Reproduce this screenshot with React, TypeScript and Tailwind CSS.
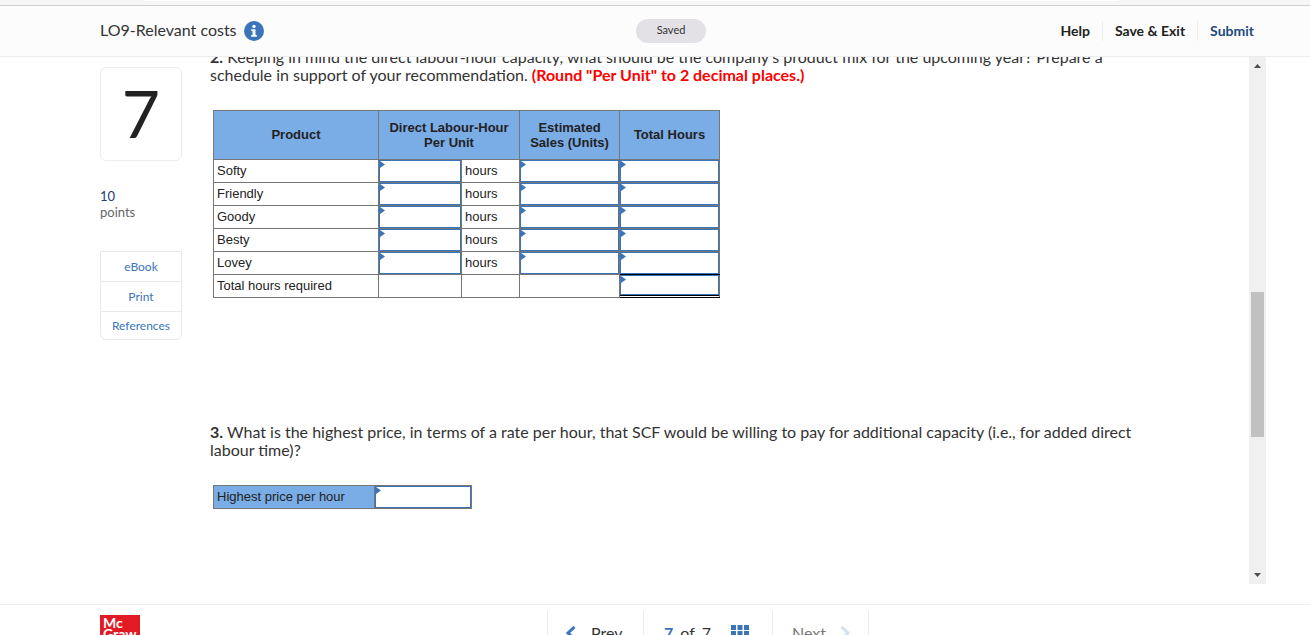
import React from "react";

const products = ["Softy", "Friendly", "Goody", "Besty", "Lovey"];

function EntryField({ label, short = false }: { label: string; short?: boolean }) {
  return (
    <div className="relative">
      <input
        type="text"
        aria-label={label}
        className={`block w-full border border-[#3a75ba] bg-white px-2 text-[13px] outline-none ${short ? "h-5" : "h-[22px]"}`}
      />
      <svg className="absolute left-px top-px" width="5" height="7" viewBox="0 0 5 7" aria-hidden="true">
        <path d="M0 0 5 3.5 0 7Z" fill="#3a75ba" />
      </svg>
    </div>
  );
}

function ScheduleTable() {
  const cell = "border border-[#767676] p-0";
  const textCell = "border border-[#767676] pt-0 pb-px pl-[3px] pr-0";
  const heading = "border border-[#767676] px-0 pt-0 pb-px";
  return (
    <table className="w-[507px] table-fixed border-collapse font-['Liberation_Sans',Arial,sans-serif] text-[13px] leading-[15px] text-[#222]">
      <colgroup>
        <col className="w-[165px]" />
        <col className="w-[83px]" />
        <col className="w-[58px]" />
        <col className="w-[100px]" />
        <col className="w-[100px]" />
      </colgroup>
      <thead>
        <tr className="h-[49px] bg-[#7aace6]">
          <th scope="col" className={heading}>Product</th>
          <th scope="col" colSpan={2} className={heading}>Direct Labour-Hour<br />Per Unit</th>
          <th scope="col" className={heading}>Estimated<br />Sales (Units)</th>
          <th scope="col" className={heading}>Total Hours</th>
        </tr>
      </thead>
      <tbody>
        {products.map((name, i) => (
          <tr key={name} className="h-[23px]">
            <td className={textCell}>{name}</td>
            <td className={cell}><EntryField label={`${name} labour-hours per unit`} /></td>
            <td className={textCell}>hours</td>
            <td className={cell}><EntryField label={`${name} estimated sales`} /></td>
            <td className={i === products.length - 1 ? "border border-[#767676] border-b-black p-0" : cell}>
              <EntryField label={`${name} total hours`} />
            </td>
          </tr>
        ))}
        <tr className="h-[23px]">
          <td className={textCell}>Total hours required</td>
          <td className={cell} />
          <td className={cell} />
          <td className={cell} />
          <td className="border border-[#767676] border-y-black p-0">
            <EntryField label="Total hours required" short />
            <div className="h-[2px] border-t border-black" />
          </td>
        </tr>
      </tbody>
    </table>
  );
}

function Header() {
  return (
    <header className="flex h-[51px] shrink-0 items-center border-b border-[#ececec] bg-[#fcfcfc] pl-[100px] pr-[56px]">
      <div className="flex flex-1 items-center gap-[7px]">
        <h1 className="pb-[2px] text-[16px] leading-5 text-[#333]">LO9-Relevant costs</h1>
        <button type="button" aria-label="Assignment information">
          <svg width="20" height="20" viewBox="0 0 20 20" className="block" aria-hidden="true">
            <circle cx="10" cy="10" r="10" fill="#3a75ba" />
            <circle cx="10" cy="5.4" r="1.7" fill="#fff" />
            <path d="M7.2 8.2h4.3v5.8h1.3v1.8H7.2V14h1.3v-4H7.2Z" fill="#fff" />
          </svg>
        </button>
      </div>
      <span className="mr-3 flex h-6 w-[70px] items-center justify-center rounded-full bg-[#e4e1e6] pb-[2px] text-[11px] text-[#333]">Saved</span>
      <nav className="flex flex-1 items-center justify-end text-[14px] font-bold leading-5 text-[#222]">
        <button type="button" className="pr-3">Help</button>
        <button type="button" className="border-l border-[#ececec] px-3">Save &amp; Exit</button>
        <button type="button" className="border-l border-[#ececec] pl-3 text-[#1d4a80]">Submit</button>
      </nav>
    </header>
  );
}

function Sidebar() {
  const item = "flex items-center justify-center border-[#e8e8e8]";
  return (
    <aside className="w-[82px] shrink-0 pt-[10px]">
      <div className="flex h-[94px] items-center justify-center rounded-md border border-[#ececec] pb-[2px] text-[66px] leading-none text-[#222]">7</div>
      <p className="mt-[27px] text-[13px] leading-4 text-[#1d3c6a]">10</p>
      <p className="text-[13px] leading-4 text-[#666]">points</p>
      <nav className="mt-[31px] flex flex-col rounded-b-md border border-[#e8e8e8] text-[12px] text-[#3a75ba]">
        <a href="#ebook" className={`${item} h-[29px]`}>eBook</a>
        <a href="#print" className={`${item} h-[30px] border-t`}>Print</a>
        <a href="#references" className={`${item} h-[28px] border-t`}>References</a>
      </nav>
    </aside>
  );
}

function ScrollTrack() {
  return (
    <div className="mr-[44px] flex w-[17px] shrink-0 flex-col items-center bg-[#f0f0f0] py-[7px]" aria-hidden="true">
      <svg width="7" height="4" viewBox="0 0 7 4" className="shrink-0"><path d="M0 4 3.5 0 7 4Z" fill="#4d4d4d" /></svg>
      <div className="grow-[224]" />
      <div className="h-[145px] w-[13px] shrink-0 bg-[#c1c1c1]" />
      <div className="grow-[136]" />
      <svg width="7" height="4" viewBox="0 0 7 4" className="shrink-0"><path d="M0 0 3.5 4 7 0Z" fill="#4d4d4d" /></svg>
    </div>
  );
}

function Footer() {
  return (
    <footer className="flex h-[31px] shrink-0 items-start overflow-hidden border-t border-[#ececec] pl-[100px]">
      <div className="mt-[10px] h-10 w-10 shrink-0 bg-[#e21a23] pl-[3px] text-[14px] font-bold leading-[11px] text-white">
        <div className="pt-[2px]">Mc</div>
        <div>Graw</div>
        <div>Hill</div>
      </div>
      <nav className="ml-[407px] mt-[6px] flex h-11 shrink-0 text-[16px] text-[#333]">
        <button type="button" className="flex w-[96px] items-center gap-[15px] border-l border-[#ececec] pl-[18px]">
          <svg width="10" height="14" viewBox="0 0 10 14" aria-hidden="true"><path d="M8.500 1 2 7l6.500 6" fill="none" stroke="#3a75ba" strokeWidth="3" /></svg>
          Prev
        </button>
        <div className="flex w-[129px] items-center border-l border-[#ececec] pl-5">
          <span className="flex gap-[7px]"><b className="text-[#3a75ba]">7</b><span>of</span><span>7</span></span>
          <button type="button" aria-label="Question list" className="ml-5">
            <svg width="18" height="17" viewBox="0 0 18 17" className="block" fill="#3a75ba" aria-hidden="true">
              <path d="M0 0h5v5H0ZM6.500 0h5v5h-5ZM13 0h5v5h-5ZM0 6h5v5H0ZM6.500 6h5v5h-5ZM13 6h5v5h-5ZM0 12h5v5H0ZM6.500 12h5v5h-5ZM13 12h5v5h-5Z" />
            </svg>
          </button>
        </div>
        <button type="button" className="flex w-[97px] items-center gap-[14px] border-x border-[#ececec] pl-[19px] text-[#777]">
          Next
          <svg width="10" height="14" viewBox="0 0 10 14" aria-hidden="true"><path d="M1.500 1 8 7l-6.500 6" fill="none" stroke="#d5e1f1" strokeWidth="3" /></svg>
        </button>
      </nav>
    </footer>
  );
}

export default function App() {
  return (
    <div className="flex h-screen flex-col overflow-hidden bg-white font-['Lato',sans-serif] text-[#333]">
      <div className="h-[6px] shrink-0 border-b border-[#d0d0d0] bg-[#f6f6f6] pl-[145px] pr-[192px]">
        <div className="h-px rounded-b bg-white" />
      </div>
      <Header />
      <main className="flex min-h-0 flex-1 pb-5 pl-[100px]">
        <Sidebar />
        <section className="ml-7 min-w-0 flex-1 overflow-hidden text-[16px] leading-[18px]">
          <p className="-mt-[9px] max-w-[930px]">
            <b>2.</b> Keeping in mind the direct labour-hour capacity, what should be the company's product mix for the upcoming year? Prepare a schedule in support of your recommendation. <b className="text-[#f00]">(Round "Per Unit" to 2 decimal places.)</b>
          </p>
          <div className="ml-[3px] mt-[26px]"><ScheduleTable /></div>
          <p className="mt-[125px] max-w-[930px]">
            <b>3.</b> What is the highest price, in terms of a rate per hour, that SCF would be willing to pay for additional capacity (i.e., for added direct labour time)?
          </p>
          <table className="ml-[3px] mt-[26px] w-[259px] table-fixed border-collapse font-['Liberation_Sans',Arial,sans-serif] text-[13px] leading-[15px] text-[#222]">
            <colgroup>
              <col className="w-[161px]" />
              <col className="w-[97px]" />
            </colgroup>
            <tbody>
              <tr className="h-[23px]">
                <th scope="row" className="border border-[#767676] bg-[#7aace6] pt-0 pb-px pl-[3px] pr-0 text-left font-normal">Highest price per hour</th>
                <td className="border border-[#767676] p-0"><EntryField label="Highest price per hour" /></td>
              </tr>
            </tbody>
          </table>
        </section>
        <ScrollTrack />
      </main>
      <Footer />
    </div>
  );
}
